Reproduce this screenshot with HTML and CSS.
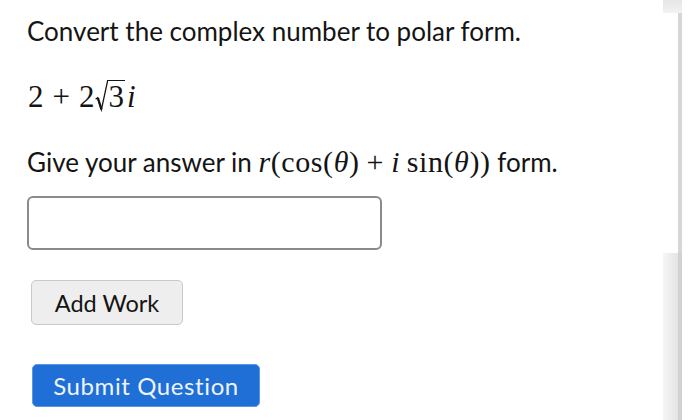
FILE: index.html
```html
<!DOCTYPE html>
<html>
<head>
<meta charset="utf-8">
<link rel="stylesheet" href="styles.css">
</head>
<body>
<div class="page">
  <main class="content">
    <p class="prompt">Convert the complex number to polar form.</p>
    <p class="expr"><span>2</span><span class="op">+</span><span>2</span><span class="sqrt"><svg class="surd" viewBox="0 0 13 32" preserveAspectRatio="none" aria-hidden="true"><path d="M0.6 18.6 L2.6 17.2 L6.4 28.8 L12.6 0.8 L13 0.8" fill="none" stroke="#141414" stroke-width="1.3" stroke-linejoin="miter"/><path d="M2.9 17.4 L6.4 28.4" fill="none" stroke="#141414" stroke-width="2.2"/></svg><span class="radicand">3</span></span><span class="mi last">i</span></p>
    <p class="prompt form">Give your answer in <span class="math"><span class="mi">r</span>(cos(<span class="mi">θ</span>)<span class="op">+</span><span class="mi">i</span>&#8201;sin(<span class="mi">θ</span>))</span> form.</p>
    <div class="answer"></div>
    <button class="btn work">Add Work</button>
    <button class="btn submit">Submit Question</button>
  </main>
  <aside class="rail">
    <div class="rail-top"></div>
    <div class="rail-thumb"></div>
    <div class="rail-bottom"></div>
  </aside>
</div>
</body>
</html>
```

FILE: styles.css
```css
html, body {
  margin: 0;
  padding: 0;
  background: #ffffff;
}

.page {
  display: flex;
  width: 700px;
  height: 420px;
  overflow: hidden;
}

.content {
  flex: 1;
  padding: 16px 0 0 27px;
  font-family: Lato, "Open Sans", sans-serif;
  color: #141414;
  display: flex;
  flex-direction: column;
  align-items: flex-start;
}

.content p {
  margin: 0;
}

.prompt {
  font-size: 26px;
  line-height: 31px;
}

.expr {
  margin-top: 32px !important;
  padding-left: 1px;
  font-family: "Liberation Serif", "DejaVu Serif", serif;
  font-size: 31px;
  line-height: 36px;
}

.op {
  margin: 0 8px;
  font-family: "Liberation Serif", serif;
}

.expr .op {
  margin: 0 9px;
}

.mi {
  font-style: italic;
  font-family: "Liberation Serif", serif;
}

.mi.last {
  margin-left: 2px;
}

.sqrt {
  position: relative;
  display: inline-block;
  padding-left: 12px;
  margin-left: 1px;
  line-height: 31px;
}

.surd {
  position: absolute;
  left: 0;
  top: 0;
  width: 13px;
  height: 33px;
}

.radicand {
  display: inline-block;
  border-top: 1.3px solid #141414;
  padding: 0 1px 0 1px;
  line-height: 31px;
}

.form {
  margin-top: 31px !important;
}

.math {
  font-family: "Liberation Serif", "DejaVu Serif", serif;
  font-size: 30px;
  letter-spacing: 0.6px;
}

.math .op {
  margin: 0 7px;
}

.answer {
  margin-top: 18px;
  width: 351px;
  height: 50px;
  border: 2px solid #8a8a8a;
  border-radius: 6px;
}

.btn {
  font-family: Lato, "Open Sans", sans-serif;
  border-radius: 5px;
  padding: 0;
  cursor: pointer;
}

.work {
  margin: 30px 0 0 4px;
  width: 152px;
  height: 45px;
  font-size: 23.5px;
  background: #eeeeee;
  color: #141414;
  border: 1px solid #c9c9c9;
}

.submit {
  margin: 39px 0 0 5px;
  width: 228px;
  height: 43px;
  font-size: 24px;
  letter-spacing: 0.6px;
  background: #1f6fd6;
  color: #eef4fc;
  border: 1px solid #5b98e2;
}

.rail {
  width: 19px;
  margin-right: 18px;
  display: flex;
  flex-direction: column;
}

.rail-top {
  height: 13px;
  background: linear-gradient(#e6e6e6, #f2f2f2);
}

.rail-thumb {
  height: 240px;
  background: #ffffff;
  border-right: 4px solid #d6d6d6;
  box-sizing: border-box;
}

.rail-bottom {
  flex: 1;
  background: linear-gradient(90deg, #f6f6f6, #e4e4e4);
  border-right: 4px solid #d2d2d2;
  box-sizing: border-box;
}
```
